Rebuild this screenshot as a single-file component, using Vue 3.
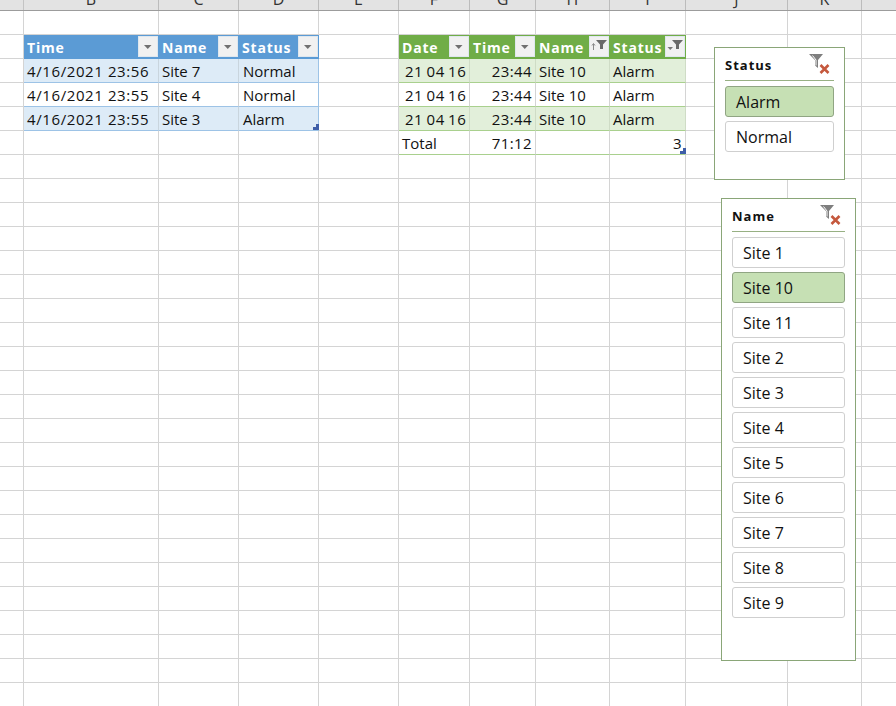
<script setup>
const colWidths = [24, 135, 80, 80, 80, 71, 66, 74, 76, 102, 74, 34]
const letters = ['', 'B', 'C', 'D', 'E', 'F', 'G', 'H', 'I', 'J', 'K', '']
const ROWS = 29

const tables = [
  {
    theme: 'blue', row: 1, col: 1, footer: false,
    head: [['Time', 'arrow'], ['Name', 'arrow'], ['Status', 'arrow']],
    rows: [
      ['4/16/2021 23:56', 'Site 7', 'Normal'],
      ['4/16/2021 23:55', 'Site 4', 'Normal'],
      ['4/16/2021 23:55', 'Site 3', 'Alarm'],
    ],
    align: ['date', '', 'st'],
  },
  {
    theme: 'green', row: 1, col: 5, footer: true,
    head: [['Date', 'arrow'], ['Time', 'arrow'], ['Name', 'sorted'], ['Status', 'filter']],
    rows: [
      ['21 04 16', '23:44', 'Site 10', 'Alarm'],
      ['21 04 16', '23:44', 'Site 10', 'Alarm'],
      ['21 04 16', '23:44', 'Site 10', 'Alarm'],
      ['Total', '71:12', '', '3'],
    ],
    align: ['ymd', 'right', '', ''],
  },
]

const cellMap = new Map()
for (const t of tables) {
  t.head.forEach((h, c) => {
    cellMap.set(`${t.row},${t.col + c}`, { kind: 'head', theme: t.theme, text: h[0], btn: h[1] })
  })
  t.rows.forEach((r, i) => {
    const isTotal = t.footer && i === t.rows.length - 1
    r.forEach((text, c) => {
      const last = i === t.rows.length - 1 && c === r.length - 1
      cellMap.set(`${t.row + 1 + i},${t.col + c}`, {
        kind: 'body',
        theme: t.theme,
        text,
        stripe: !isTotal && i % 2 === 0,
        total: isTotal,
        cls: isTotal ? (c > 0 ? 'right' : 'lbl') : t.align[c],
        handle: last,
      })
    })
  })
}

const cells = []
for (let r = 0; r < ROWS; r++) {
  for (let c = 0; c < colWidths.length; c++) {
    cells.push({ key: `${r}-${c}`, info: cellMap.get(`${r},${c}`) || null })
  }
}

const slicers = [
  { name: 'status', title: 'Status', items: [['Alarm', true], ['Normal', false]] },
  {
    name: 'site', title: 'Name',
    items: ['Site 1', 'Site 10', 'Site 11', 'Site 2', 'Site 3', 'Site 4', 'Site 5', 'Site 6', 'Site 7', 'Site 8', 'Site 9']
      .map((s) => [s, s === 'Site 10']),
  },
]

const gridColumns = colWidths.map((w) => w + 'px').join(' ')
</script>

<template>
  <div class="app">
    <div class="cols" :style="{ gridTemplateColumns: gridColumns }">
      <div v-for="(l, i) in letters" :key="i" class="col-h"><span>{{ l }}</span></div>
    </div>
    <div class="sheet" :style="{ gridTemplateColumns: gridColumns }">
      <div
        v-for="cell in cells"
        :key="cell.key"
        class="cell"
        :class="cell.info ? [cell.info.kind, cell.info.theme, cell.info.cls, { stripe: cell.info.stripe, total: cell.info.total }] : []"
      >
        <template v-if="cell.info && cell.info.kind === 'head'">
          <span class="h-label">{{ cell.info.text }}</span>
          <span class="fbtn">
            <svg width="18" height="19" viewBox="0 0 18 19">
              <path v-if="cell.info.btn === 'arrow'" d="M5 8h7.5L8.75 12z" fill="#707070" />
              <template v-else-if="cell.info.btn === 'sorted'">
                <path d="M6 3h11l-4 4.5V12h-3V7.500z" fill="#6a6a6a" />
                <path d="M3.500 13V7M2 8.500l1.500-2 1.500 2" fill="none" stroke="#8a8a8a" stroke-width="1" />
              </template>
              <template v-else>
                <path d="M6 3h11l-4 4.5V12h-3V7.500z" fill="#6a6a6a" />
                <path d="M1.500 10h5.500l-2.750 3z" fill="#777" />
              </template>
            </svg>
          </span>
        </template>
        <template v-else-if="cell.info">
          <span>{{ cell.info.text }}</span>
          <i v-if="cell.info.handle" class="handle"></i>
        </template>
      </div>
    </div>

    <section v-for="s in slicers" :key="s.name" class="slicer" :class="s.name">
      <header class="s-head">
        <span class="s-title">{{ s.title }}</span>
        <svg class="s-clear" width="24" height="24" viewBox="0 0 24 24">
          <path d="M1 2h14L10 8v8l-3-2.500V8z" fill="#7e7e7e" />
          <path d="M4.500 3.500l3.500 4.500v5.500" fill="none" stroke="#fff" stroke-width="1" />
          <path d="M12.500 13l8 8M20.500 13l-8 8" stroke="#c5583d" stroke-width="2.600" />
        </svg>
      </header>
      <div class="s-list">
        <div v-for="it in s.items" :key="it[0]" class="s-item" :class="{ on: it[1] }">{{ it[0] }}</div>
      </div>
    </section>
  </div>
</template>

<style scoped>
.app {
  position: relative;
  width: 896px;
  height: 706px;
  overflow: hidden;
  background: #fff;
  font-family: "Open Sans", "Liberation Sans", sans-serif;
  color: #111;
}
.cols {
  display: grid;
  height: 11px;
  background: #e3e3e3;
  border-bottom: 1px solid #9c9c9c;
  box-sizing: border-box;
}
.col-h {
  position: relative;
  overflow: hidden;
  border-right: 1px solid #bcbcbc;
  text-align: center;
  color: #333;
  font-size: 16px;
  line-height: 0;
}
.col-h:first-child { border-right-color: #c4c4c4; }
.col-h:last-child { border-right: 0; }
.col-h span {
  display: block;
  line-height: 1;
  margin-top: -9px;
}
.sheet {
  display: grid;
  grid-auto-rows: 24px;
}
.cell {
  position: relative;
  box-sizing: border-box;
  display: flex;
  align-items: center;
  border-right: 1px solid #d4d4d4;
  border-bottom: 1px solid #d4d4d4;
  font-size: 15px;
  white-space: nowrap;
  padding-left: 3px;
}
.cell:nth-child(12n) { border-right: 0; }

.head {
  justify-content: space-between;
  padding: 1px 0 0 3px;
  color: #fff;
  font-weight: 700;
  font-size: 14px;
  letter-spacing: 0.8px;
}
.head.blue { background: #5b9bd5; border-color: #5b9bd5; }
.head.green { background: #70ad47; border-color: #70ad47; }
.fbtn {
  flex: none;
  width: 20px;
  height: 21px;
  box-sizing: border-box;
  background: #f1f1f1;
  border: 1px solid #dfe7ee;
  display: flex;
  align-items: center;
  justify-content: center;
  margin-top: -1px;
}
.body.blue { border-color: #9dc3e6; border-right-color: #d4d4d4; }
.body.green { border-color: #a9d08e; border-right-color: #d4d4d4; }
.body.blue.stripe { background: #ddebf7; border-right-color: #c9d5de; }
.body.green.stripe { background: #e2efda; border-right-color: #cfdcc6; }
.body.blue:nth-child(12n + 4) { border-right-color: #9dc3e6; }
.cell.body.green.total { border-right-color: #d4d4d4; }
.date { letter-spacing: 0.6px; }
.st { padding-left: 4px; }
.ymd { padding-left: 6px; word-spacing: -1px; letter-spacing: 0.5px; }
.right { justify-content: flex-end; padding-right: 3px; letter-spacing: 0.4px; }
.lbl { padding-left: 3px; }
.handle {
  position: absolute;
  right: -1px;
  bottom: 0;
  width: 6px;
  height: 6px;
  background: #3f5ea8;
  clip-path: polygon(100% 0, 100% 100%, 0 100%, 0 50%, 50% 50%, 50% 0);
}

.slicer {
  position: absolute;
  box-sizing: border-box;
  background: #fff;
  border: 1px solid #8aa678;
  display: flex;
  flex-direction: column;
}
.slicer.status { left: 714px; top: 47px; width: 131px; height: 133px; padding: 0 10px; }
.slicer.site { left: 721px; top: 198px; width: 135px; height: 463px; padding: 0 10px; }
.s-head {
  position: relative;
  flex: none;
  height: 33px;
  display: flex;
  align-items: center;
  border-bottom: 1px solid #97b083;
  padding-top: 1px;
  box-sizing: border-box;
}
.s-title {
  font-size: 13px;
  font-weight: 700;
  letter-spacing: 1px;
  color: #111;
}
.s-clear {
  position: absolute;
  right: 2px;
  top: 4px;
}
.s-list {
  display: flex;
  flex-direction: column;
  gap: 4px;
  padding-top: 5px;
}
.s-item {
  height: 31px;
  box-sizing: border-box;
  border: 1px solid #cfcfcf;
  border-radius: 3px;
  display: flex;
  align-items: center;
  padding-left: 10px;
  font-size: 16px;
  color: #111;
  background: #fff;
}
.s-item.on {
  background: #c6e0b4;
  border-color: #90a583;
}
</style>

<style>
html, body { margin: 0; background: #fff; overflow: hidden; }
</style>
